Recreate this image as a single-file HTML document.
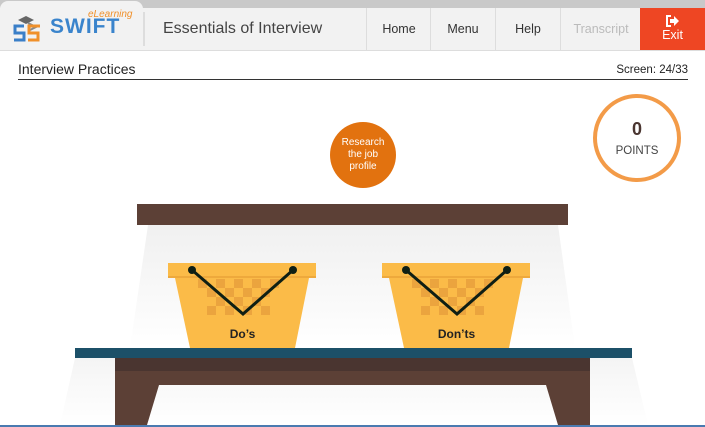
<!DOCTYPE html>
<html><head><style>
body{margin:0;width:705px;height:427px;overflow:hidden;background:#fff;font-family:"Liberation Sans",sans-serif;position:relative}
.a{position:absolute}
.nav{position:absolute;top:8px;height:42px;line-height:42px;text-align:center;font-size:12.5px;color:#333;border-left:1px solid #ddd}
</style></head><body>
<div class="a" style="left:0;top:0;width:705px;height:8px;background:#c9c9c9"></div>
<div class="a" style="left:0;top:8px;width:705px;height:42px;background:#f2f2f2;border-bottom:1px solid #ddd"></div>
<div class="a" style="left:0;top:1px;width:143px;height:49px;background:#f2f2f2;border-radius:8px 8px 0 0"></div>
<div class="a" style="left:143px;top:12px;width:2px;height:34px;background:#ddd"></div>
<svg class="a" style="left:12px;top:14px" width="32" height="30" viewBox="0 0 32 30">
<path d="M14 2 L22 6 L14 10 L6 6Z" fill="#666"/><path d="M16 9 L24 13 L18 16" fill="none" stroke="#888" stroke-width="2"/>
<path d="M12 12 H3 V19 H12 V26 H2" fill="none" stroke="#3a7fc8" stroke-width="3"/>
<path d="M28 12 H17 V19 H26 V26 H16" fill="none" stroke="#f0902a" stroke-width="3"/></svg>
<div class="a" style="left:50px;top:15px;font-size:21px;font-weight:bold;color:#3a84cc;letter-spacing:1px">SWIFT</div>
<div class="a" style="left:88px;top:9px;font-size:10px;font-style:italic;color:#f0902a">eLearning</div>
<div class="a" style="left:163px;top:20px;font-size:16px;color:#444">Essentials of Interview</div>
<div class="nav" style="left:366px;width:64px">Home</div>
<div class="nav" style="left:430px;width:64px">Menu</div>
<div class="nav" style="left:495px;width:64px">Help</div>
<div class="nav" style="left:560px;width:80px;color:#bbb">Transcript</div>
<div class="a" style="left:640px;top:8px;width:65px;height:42px;background:#ee4623;color:#fff;text-align:center;font-size:12.5px">
<svg style="display:block;margin:7px auto 0" width="14" height="12" viewBox="0 0 14 12"><path d="M5 1 H1 V11 H5" fill="none" stroke="#fff" stroke-width="2"/><path d="M4 4 H8 V1 L13 6 L8 11 V8 H4Z" fill="#fff"/></svg>
<div style="margin-top:1px">Exit</div></div>
<div class="a" style="left:18px;top:61px;font-size:14px;color:#222">Interview Practices</div>
<div class="a" style="right:17px;top:64px;font-size:11.5px;color:#222">Screen: 24/33</div>
<div class="a" style="left:18px;top:79px;width:670px;height:1px;background:#333"></div>
<div class="a" style="left:330px;top:122px;width:66px;height:66px;border-radius:50%;background:#e2720f;color:#fff;font-size:10px;text-align:center;line-height:12px"><div style="margin-top:15px">Research<br>the job<br>profile</div></div>
<div class="a" style="left:593px;top:94px;width:80px;height:80px;border-radius:50%;border:4px solid #f39b48;text-align:center">
<div style="margin-top:21px;font-size:18px;font-weight:bold;color:#4a3530">0</div><div style="font-size:11.5px;color:#444;margin-top:5px">POINTS</div></div>
<svg class="a" style="left:0;top:0" width="705" height="427">
<defs><linearGradient id="g" x1="0" y1="0" x2="0" y2="1"><stop offset="0" stop-color="#f0f0f0"/><stop offset="1" stop-color="#fff"/></linearGradient>
<linearGradient id="g2" x1="0" y1="0" x2="0" y2="1"><stop offset="0" stop-color="#f4f4f4"/><stop offset="1" stop-color="#fff"/></linearGradient>
<g id="bk"><rect x="168" y="263" width="148" height="14" fill="#fbbb48"/><rect x="168" y="276" width="148" height="2" fill="#eea93c"/>
<path d="M175 278 H309 L295 348 H190Z" fill="#fbbb48"/>
<g fill="#eba43e"><rect x="198" y="279" width="9" height="9"/><rect x="216" y="279" width="9" height="9"/><rect x="234" y="279" width="9" height="9"/><rect x="252" y="279" width="9" height="9"/><rect x="270" y="279" width="9" height="9"/>
<rect x="207" y="288" width="9" height="9"/><rect x="225" y="288" width="9" height="9"/><rect x="243" y="288" width="9" height="9"/><rect x="261" y="288" width="9" height="9"/>
<rect x="216" y="297" width="9" height="9"/><rect x="234" y="297" width="9" height="9"/><rect x="252" y="297" width="9" height="9"/>
<rect x="207" y="306" width="9" height="9"/><rect x="225" y="306" width="9" height="9"/><rect x="243" y="306" width="9" height="9"/><rect x="261" y="306" width="9" height="9"/></g>
<path d="M192 270 L243 314 L293 270" fill="none" stroke="#0f1f14" stroke-width="3"/><circle cx="192" cy="270" r="4" fill="#0f1f14"/><circle cx="293" cy="270" r="4" fill="#0f1f14"/></g></defs>
<path d="M148 225 H558 L575 348 H130Z" fill="url(#g)"/>
<path d="M75 358 H632 L648 425 H60Z" fill="url(#g2)"/>
<rect x="137" y="204" width="431" height="21" fill="#5c4036"/>
<use href="#bk"/>
<g transform="translate(214 0)"><use href="#bk"/></g>
<rect x="75" y="348" width="557" height="10" fill="#1c5068"/>
<rect x="115" y="358" width="475" height="13" fill="#4a3530"/>
<path d="M115 371 H590 V425 H558 L546 385 H159 L147 425 H115Z" fill="#5c4036"/>
<rect x="0" y="425" width="705" height="2" fill="#4a7ab0"/>
</svg>
<div class="a" style="left:190px;top:327px;width:105px;text-align:center;font-size:12px;font-weight:bold;color:#222">Do’s</div>
<div class="a" style="left:404px;top:327px;width:105px;text-align:center;font-size:12px;font-weight:bold;color:#222">Don’ts</div>
</body></html>
